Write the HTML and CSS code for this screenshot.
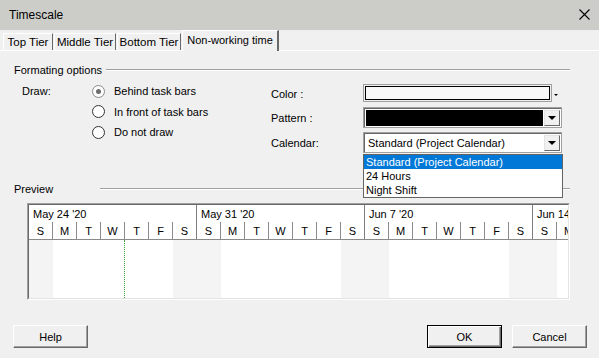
FILE: index.html
```html
<!DOCTYPE html>
<html>
<head>
<meta charset="utf-8">
<link rel="stylesheet" href="styles.css">
</head>
<body>
<div class="dialog">
  <div class="titlebar">
    <span class="title">Timescale</span>
    <svg class="close" width="11" height="11" viewBox="0 0 11 11"><path d="M0.5 0.5 L10.5 10.5 M10.5 0.5 L0.5 10.5" stroke="#000" stroke-width="1.1" fill="none"/></svg>
  </div>
  <div class="tabs">
    <div class="tab t1">Top Tier</div>
    <div class="tab t2">Middle Tier</div>
    <div class="tab t3">Bottom Tier</div>
    <div class="tab active">Non-working time</div>
  </div>
  <div class="panel">
    <div class="group-head">
      <span>Formating options</span>
      <div class="rule rule-format"></div>
    </div>
    <div class="format">
      <div class="draw-label">Draw:</div>
      <div class="radios">
        <div class="radio"><span class="dot checked"></span>Behind task bars</div>
        <div class="radio"><span class="dot"></span>In front of task bars</div>
        <div class="radio"><span class="dot"></span>Do not draw</div>
      </div>
      <div class="fields">
        <div class="flabel">Color :</div>
        <div class="color-cell">
          <div class="colorbox"><div class="swatch"></div></div>
          <span class="mini-arrow"></span>
        </div>
        <div class="flabel">Pattern :</div>
        <div class="combo">
          <div class="fill"></div>
          <div class="cbtn"><span class="tri"></span></div>
        </div>
        <div class="flabel">Calendar:</div>
        <div class="calendar-wrap">
          <div class="combo">
            <div class="ctext">Standard (Project Calendar)</div>
            <div class="cbtn"><span class="tri"></span></div>
          </div>
          <div class="list">
            <div class="item sel">Standard (Project Calendar)</div>
            <div class="item">24 Hours</div>
            <div class="item">Night Shift</div>
          </div>
        </div>
      </div>
    </div>
    <div class="group-head preview-head">
      <span>Preview</span>
      <div class="rule rule-preview"></div>
    </div>
    <div class="gantt">
      <div class="gantt-inner">
        <div class="hdr">
          <div class="week">
            <div class="month">May 24 '20</div>
            <div class="days"><div class="d">S</div><div class="d">M</div><div class="d">T</div><div class="d">W</div><div class="d">T</div><div class="d">F</div><div class="d">S</div></div>
          </div>
          <div class="week">
            <div class="month">May 31 '20</div>
            <div class="days"><div class="d">S</div><div class="d">M</div><div class="d">T</div><div class="d">W</div><div class="d">T</div><div class="d">F</div><div class="d">S</div></div>
          </div>
          <div class="week">
            <div class="month">Jun 7 '20</div>
            <div class="days"><div class="d">S</div><div class="d">M</div><div class="d">T</div><div class="d">W</div><div class="d">T</div><div class="d">F</div><div class="d">S</div></div>
          </div>
          <div class="week">
            <div class="month">Jun 14 '20</div>
            <div class="days"><div class="d">S</div><div class="d">M</div><div class="d">T</div><div class="d">W</div><div class="d">T</div><div class="d">F</div><div class="d">S</div></div>
          </div>
        </div>
        <div class="bdy">
          <div class="bw"><div class="bc we"></div><div class="bc"></div><div class="bc"></div><div class="bc today"></div><div class="bc"></div><div class="bc"></div><div class="bc we"></div></div>
          <div class="bw"><div class="bc we"></div><div class="bc"></div><div class="bc"></div><div class="bc"></div><div class="bc"></div><div class="bc"></div><div class="bc we"></div></div>
          <div class="bw"><div class="bc we"></div><div class="bc"></div><div class="bc"></div><div class="bc"></div><div class="bc"></div><div class="bc"></div><div class="bc we"></div></div>
          <div class="bw"><div class="bc we"></div><div class="bc"></div><div class="bc"></div><div class="bc"></div><div class="bc"></div><div class="bc"></div><div class="bc we"></div></div>
        </div>
      </div>
    </div>
    <div class="footer">
      <button class="btn">Help</button>
      <div class="spacer"></div>
      <button class="btn default">OK</button>
      <button class="btn">Cancel</button>
    </div>
  </div>
</div>
</body>
</html>
```
FILE: styles.css
```css
body {
  margin: 0;
  background: #f0f0f0;
  font-family: "Liberation Sans", Arial, sans-serif;
  font-size: 11px;
  color: #000;
}

.dialog {
  width: 599px;
  height: 358px;
  overflow: hidden;
  background: #f0f0f0;
}

.titlebar {
  height: 30px;
  background: #cccdc9;
  display: flex;
  align-items: center;
  justify-content: space-between;
  padding: 0 9px;
  box-sizing: border-box;
}

.title {
  font-size: 12px;
}

.close {
  display: block;
  margin-top: -1px;
}

.tabs {
  height: 20px;
  display: flex;
  align-items: flex-end;
  padding-left: 3px;
  gap: 1px;
}

.tab {
  height: 17px;
  box-sizing: border-box;
  border-top: 1px solid #fff;
  border-left: 1px solid #fff;
  border-right: 1px solid #696969;
  line-height: 16px;
  text-align: center;
  background: #f0f0f0;
  white-space: nowrap;
  font-size: 11.5px;
}

.t1 { width: 50px; }
.t2 { width: 62px; }
.t3 { width: 64px; }

.tab.active {
  width: 97px;
  height: 21px;
  margin-bottom: -1px;
  position: relative;
  z-index: 1;
  line-height: 18px;
  border-right: 2px solid #696969;
  font-size: 11px;
}

.panel {
  border-top: 1px solid #fff;
}

.group-head {
  display: flex;
  align-items: flex-start;
  height: 14px;
  line-height: 14px;
  margin: 12px 29px 0 14px;
}

.rule {
  margin-left: auto;
  margin-top: 6px;
  border-top: 1px solid #a0a0a0;
  border-bottom: 1px solid #fff;
}

.rule-format { width: 464px; }
.rule-preview { width: 470px; }

.format {
  display: flex;
  margin-top: 4px;
  padding-left: 22px;
}

.draw-label {
  width: 70px;
  height: 20.5px;
  line-height: 20px;
}

.radios {
  width: 179px;
  display: flex;
  flex-direction: column;
}

.radio {
  height: 20.5px;
  display: flex;
  align-items: center;
}

.dot {
  width: 13px;
  height: 13px;
  border-radius: 50%;
  box-sizing: border-box;
  border: 1px solid #333;
  background: #fff;
  margin-right: 9px;
  display: flex;
  align-items: center;
  justify-content: center;
}

.dot.checked {
  border-color: #8a8a8a;
}

.dot.checked::after {
  content: "";
  width: 5px;
  height: 5px;
  border-radius: 50%;
  background: #6d6d6d;
}

.fields {
  margin-top: 3px;
  display: grid;
  grid-template-columns: 92px 199px;
  grid-template-rows: 19px 21px 21px;
  row-gap: 4px;
}

.flabel {
  display: flex;
  align-items: center;
}

.color-cell {
  display: flex;
  align-items: flex-start;
}

.colorbox {
  width: 189px;
  height: 18px;
  border: 1px solid #a0a0a0;
  box-sizing: border-box;
  padding: 1px;
}

.swatch {
  height: 100%;
  border: 1px solid #000;
  background: #f8f8f8;
  box-sizing: border-box;
}

.mini-arrow {
  margin: 10px 0 0 2px;
  width: 0;
  height: 0;
  border-left: 2px solid transparent;
  border-right: 2px solid transparent;
  border-top: 2px solid #000;
}

.combo {
  height: 21px;
  display: flex;
  box-sizing: border-box;
  border: 1px solid #a0a0a0;
  box-shadow: inset 1px 1px 0 #696969;
  padding: 2px 1px 1px 2px;
  background: #fff;
}

.fill {
  flex: 1;
  background: #000;
  margin-right: 1px;
}

.ctext {
  flex: 1;
  line-height: 16px;
  padding-left: 2px;
  white-space: nowrap;
}

.cbtn {
  width: 16px;
  box-sizing: border-box;
  border: 1px solid;
  border-color: #e3e3e3 #696969 #696969 #e3e3e3;
  background: #f0f0f0;
  display: flex;
  align-items: center;
  justify-content: center;
}

.tri {
  width: 0;
  height: 0;
  border-left: 4px solid transparent;
  border-right: 4px solid transparent;
  border-top: 4px solid #000;
}

.calendar-wrap {
  position: relative;
}

.list {
  position: absolute;
  left: 0;
  top: calc(100% + 1px);
  width: 200px;
  box-sizing: border-box;
  border: 1px solid #646464;
  background: #fff;
  z-index: 2;
}

.item {
  height: 14px;
  line-height: 14px;
  padding-left: 2px;
  white-space: nowrap;
}

.item.sel {
  background: #0078d7;
  color: #fff;
}

.preview-head {
  margin-top: 29px;
}

.gantt {
  margin: 7px 29px 0 27px;
  border: 1px solid;
  border-color: #a0a0a0 #fff #fff #a0a0a0;
}

.gantt-inner {
  border: 1px solid;
  border-color: #696969 #e3e3e3 #e3e3e3 #696969;
  overflow: hidden;
  background: #fff;
}

.hdr {
  display: flex;
  border-bottom: 1px solid #8a8a8a;
}

.week {
  flex: none;
  width: 168px;
  box-sizing: border-box;
  border-right: 1px solid #7d7d7d;
}

.month {
  height: 17px;
  line-height: 18px;
  padding-left: 4px;
  white-space: nowrap;
}

.days {
  display: flex;
  height: 17px;
}

.d {
  flex: none;
  width: 24px;
  box-sizing: border-box;
  border-right: 1px solid #8a8a8a;
  text-align: center;
  line-height: 18px;
}

.d:last-child {
  width: 23px;
  border-right: 0;
}

.bdy {
  display: flex;
  height: 58px;
}

.bw {
  flex: none;
  width: 168px;
  display: flex;
}

.bc {
  flex: none;
  width: 24px;
  box-sizing: border-box;
}

.bc.we {
  background: #f4f4f4;
}

.bc.today {
  border-right: 1px dotted #3f9f3f;
}

.footer {
  display: flex;
  gap: 10px;
  margin-top: 25px;
  padding: 0 12px 0 13px;
}

.spacer {
  flex: 1;
}

.btn {
  width: 75px;
  height: 23px;
  padding: 0;
  font-family: "Liberation Sans", Arial, sans-serif;
  font-size: 11px;
  color: #000;
  background: #f0f0f0;
  border: 1px solid;
  border-color: #fff #696969 #696969 #fff;
  box-shadow: inset -1px -1px 0 #a0a0a0;
}

.btn.default {
  border: 1px solid #000;
  box-shadow: inset 1px 1px 0 #fff, inset -1px -1px 0 #696969, inset -2px -2px 0 #a0a0a0;
}
```
